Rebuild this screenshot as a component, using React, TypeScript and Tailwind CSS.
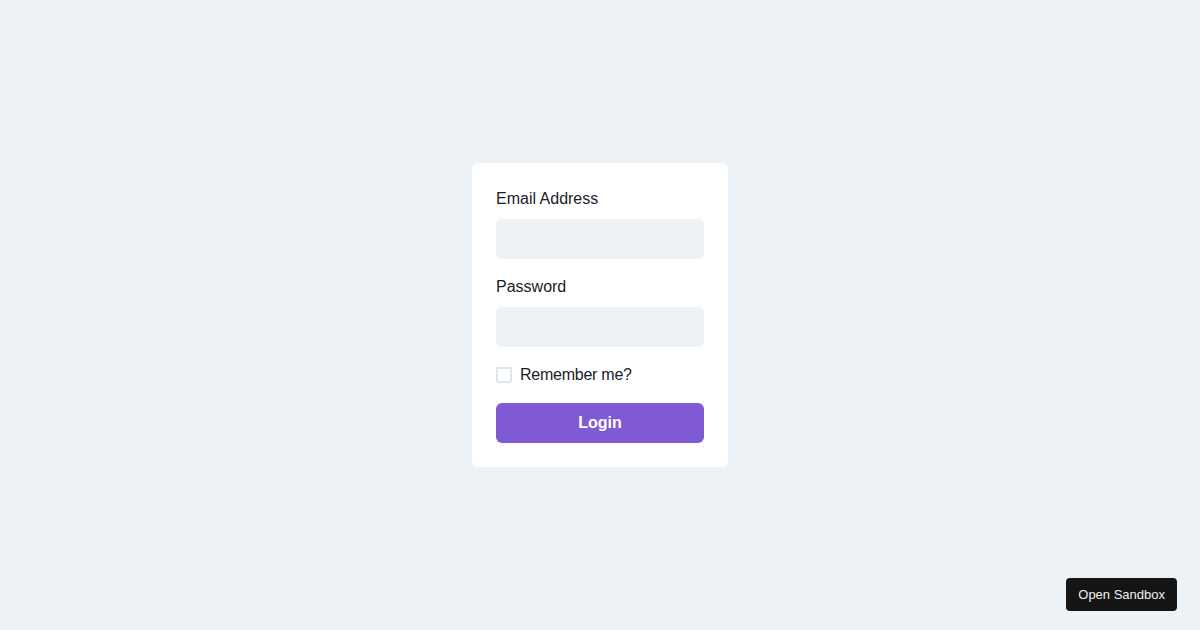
export default function App() {
  return (
    <div className="relative flex h-[630px] w-full items-center justify-center bg-[#edf2f7] font-['Liberation_Sans',Arial,sans-serif] text-[#1a202c]">
      <form className="flex w-[256px] flex-col rounded-md bg-white p-6">
        <label className="text-base leading-6">Email Address</label>
        <input
          type="email"
          className="mt-2 h-10 w-full rounded-md bg-[#edf2f7] px-3 outline-none"
        />
        <label className="mt-4 text-base leading-6">Password</label>
        <input
          type="password"
          className="mt-2 h-10 w-full rounded-md bg-[#edf2f7] px-3 outline-none"
        />
        <label className="mt-4 flex h-6 items-center gap-2 text-base tracking-[-0.25px]">
          <span className="h-4 w-4 rounded-[2px] border-2 border-[#dbe7f1]" />
          Remember me?
        </label>
        <button
          type="button"
          className="mt-4 h-10 w-full rounded-md bg-[#805ad5] text-base font-bold text-white"
        >
          Login
        </button>
      </form>
      <button
        type="button"
        className="absolute bottom-[19px] right-[23px] h-[33px] rounded-[4px] bg-[#151515] px-3 text-[13px] text-[#f0f0f0]"
      >
        Open Sandbox
      </button>
    </div>
  );
}
